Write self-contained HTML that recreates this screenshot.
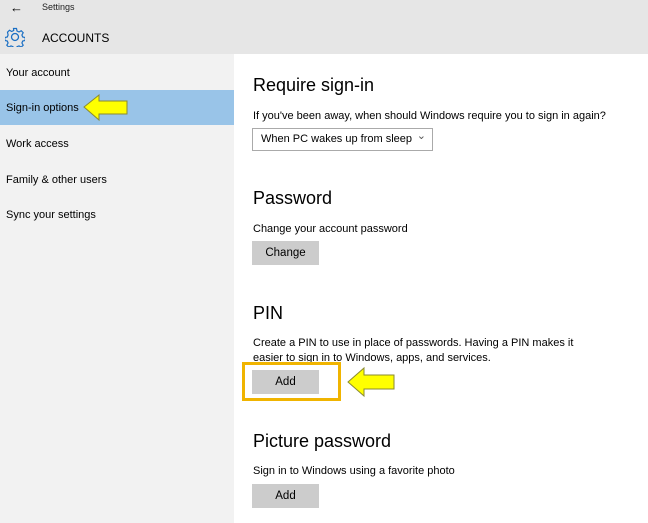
<html><head><style>
body{margin:0;width:648px;height:523px;position:relative;overflow:hidden;font-family:"Liberation Sans",sans-serif;background:#fff}
.a{position:absolute;white-space:nowrap}
.btn{position:absolute;background:#ccc;font-size:11.5px;color:#000;text-align:center;line-height:24px}
h2{position:absolute;margin:0;font-weight:normal;font-size:18px;color:#000}
.t{position:absolute;font-size:11px;color:#000;white-space:nowrap}
</style></head><body>
<div class="a" style="left:0;top:0;width:648px;height:54px;background:#e6e6e6"></div>
<div class="a" style="left:0;top:54px;width:234px;height:469px;background:#f2f2f2"></div>
<div class="a" style="left:10px;top:0;font-size:13px">&larr;</div>
<div class="a" style="left:42px;top:2px;font-size:9px;color:#222">Settings</div>
<svg class="a" style="left:5px;top:27px" width="20" height="20" viewBox="0 0 20 20"><circle cx="10" cy="10" r="3.5" fill="none" stroke="#1a6fc4" stroke-width="1.3"/><path d="M8.5 1.5h3l.5 2.5 2 1 2.2-1.3 2 2-1.3 2.3.8 2 2.5.5v3l-2.5.5-.8 2 1.3 2.2-2 2-2.2-1.3-2 .8-.5 2.5h-3l-.5-2.5-2-.8-2.2 1.3-2-2 1.3-2.2-.8-2-2.5-.5v-3l2.5-.5.8-2L2.5 5.2l2-2L6.7 4.5l2-1z" fill="none" stroke="#1a6fc4" stroke-width="1.2"/></svg>
<div class="a" style="left:42px;top:31px;font-size:12px;color:#000">ACCOUNTS</div>
<div class="t" style="left:6px;top:67px">Your account</div>
<div class="a" style="left:0;top:90px;width:234px;height:35px;background:#99c4e8"></div>
<div class="t" style="left:6px;top:102px">Sign-in options</div>
<svg class="a" style="left:82px;top:93px" width="50" height="30"><polygon points="2,14 17,2 17,8 45,8 45,21 17,21 17,27" fill="#ffff00" stroke="#8a8a30" stroke-width="1"/></svg>
<div class="t" style="left:6px;top:138px">Work access</div>
<div class="t" style="left:6px;top:174px">Family &amp; other users</div>
<div class="t" style="left:6px;top:209px">Sync your settings</div>

<h2 style="left:253px;top:75px">Require sign-in</h2>
<div class="t" style="left:253px;top:110px">If you've been away, when should Windows require you to sign in again?</div>
<div class="a" style="left:252px;top:128px;width:181px;height:23px;border:1px solid #aaa;box-sizing:border-box;font-size:11px;line-height:21px;padding-left:8px">When PC wakes up from sleep <span style="position:absolute;right:6px;top:-3px;color:#555">&#8964;</span></div>
<h2 style="left:253px;top:188px">Password</h2>
<div class="t" style="left:253px;top:223px">Change your account password</div>
<div class="btn" style="left:252px;top:241px;width:67px;height:24px">Change</div>
<h2 style="left:253px;top:303px">PIN</h2>
<div class="t" style="left:253px;top:337px">Create a PIN to use in place of passwords. Having a PIN makes it</div>
<div class="t" style="left:253px;top:352px">easier to sign in to Windows, apps, and services.</div>
<div class="btn" style="left:252px;top:370px;width:67px;height:24px">Add</div>
<div class="a" style="left:242px;top:362px;width:99px;height:39px;border:3px solid #f0b400;box-sizing:border-box"></div>
<svg class="a" style="left:346px;top:366px" width="52" height="32"><polygon points="2,16 18,2 18,9 48,9 48,23 18,23 18,30" fill="#ffff00" stroke="#8a8a30" stroke-width="1"/></svg>
<h2 style="left:253px;top:431px">Picture password</h2>
<div class="t" style="left:253px;top:465px">Sign in to Windows using a favorite photo</div>
<div class="btn" style="left:252px;top:484px;width:67px;height:24px">Add</div>
</body></html>
